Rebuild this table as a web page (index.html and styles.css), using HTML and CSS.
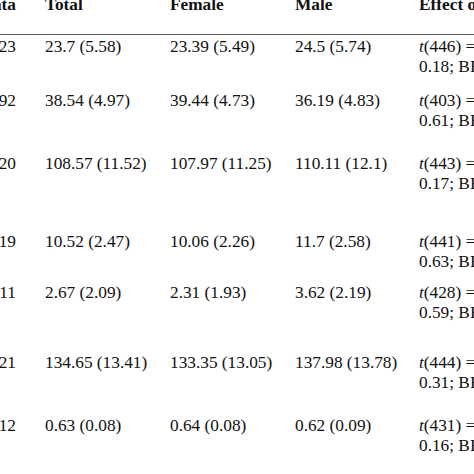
FILE: index.html
```html
<!DOCTYPE html>
<html lang="en">
<head>
<meta charset="utf-8">
<title>Descriptive statistics by gender</title>
<link rel="stylesheet" href="styles.css">
</head>
<body>
<table class="stats">
  <colgroup>
    <col class="col-alpha">
    <col class="col-num">
    <col class="col-num">
    <col class="col-male">
    <col class="col-eff">
  </colgroup>
  <thead>
    <tr>
      <th class="alpha">Cronbach's α in<br>current data</th>
      <th>Total</th>
      <th>Female</th>
      <th>Male</th>
      <th>Effect of gender</th>
    </tr>
  </thead>
  <tbody>
    <tr class="h54">
      <td class="alpha">.823</td>
      <td>23.7 (5.58)</td>
      <td>23.39 (5.49)</td>
      <td>24.5 (5.74)</td>
      <td><i>t</i>(446) = −1.86, <i>p</i> = .064, <i>d</i> =<br>0.18; BF<sub>01</sub> = 2.04</td>
    </tr>
    <tr class="h63">
      <td class="alpha">.792</td>
      <td>38.54 (4.97)</td>
      <td>39.44 (4.73)</td>
      <td>36.19 (4.83)</td>
      <td><i>t</i>(403) = 6.12, <i>p</i> &lt; .001, <i>d</i> =<br>0.61; BF<sub>10</sub> &gt; 1000</td>
    </tr>
    <tr class="h78">
      <td class="alpha">.920</td>
      <td>108.57 (11.52)</td>
      <td>107.97 (11.25)</td>
      <td>110.11 (12.1)</td>
      <td><i>t</i>(443) = −1.73, <i>p</i> = .084, <i>d</i> =<br>0.17; BF<sub>01</sub> = 2.41</td>
    </tr>
    <tr class="h51">
      <td class="alpha">.719</td>
      <td>10.52 (2.47)</td>
      <td>10.06 (2.26)</td>
      <td>11.7 (2.58)</td>
      <td><i>t</i>(441) = −6.55, <i>p</i> &lt; .001, <i>d</i> =<br>0.63; BF<sub>10</sub> &gt; 1000</td>
    </tr>
    <tr class="h70">
      <td class="alpha">.611</td>
      <td>2.67 (2.09)</td>
      <td>2.31 (1.93)</td>
      <td>3.62 (2.19)</td>
      <td><i>t</i>(428) = −6.02, <i>p</i> &lt; .001, <i>d</i> =<br>0.59; BF<sub>10</sub> &gt; 1000</td>
    </tr>
    <tr class="h63">
      <td class="alpha">.921</td>
      <td>134.65 (13.41)</td>
      <td>133.35 (13.05)</td>
      <td>137.98 (13.78)</td>
      <td><i>t</i>(444) = −3.22, <i>p</i> = .001, <i>d</i> =<br>0.31; BF<sub>10</sub> = 14.6</td>
    </tr>
    <tr class="h63">
      <td class="alpha">.712</td>
      <td>0.63 (0.08)</td>
      <td>0.64 (0.08)</td>
      <td>0.62 (0.09)</td>
      <td><i>t</i>(431) = 1.62, <i>p</i> = .106, <i>d</i> =<br>0.16; BF<sub>01</sub> = 2.73</td>
    </tr>
  </tbody>
</table>
</body>
</html>
```
FILE: styles.css
```css
html, body {
  margin: 0;
  padding: 0;
  background: #ffffff;
}

body {
  width: 474px;
  height: 474px;
  overflow: hidden;
}

.stats {
  border-collapse: collapse;
  table-layout: fixed;
  width: 829px;
  margin: -25px 0 0 -110px;
  font-family: "Liberation Serif", "Times New Roman", serif;
  font-size: 17.3px;
  line-height: 20px;
  color: #111111;
}

.col-alpha { width: 155px; }
.col-num { width: 125px; }
.col-male { width: 124px; }
.col-eff { width: 300px; }

.stats th {
  font-weight: bold;
  text-align: left;
  vertical-align: bottom;
  padding: 0 0 19px 0;
  border-bottom: 1px solid #5a5a5a;
  white-space: nowrap;
}

.stats td {
  text-align: left;
  vertical-align: top;
  padding: 2px 0 0 0;
  white-space: nowrap;
}

.stats .alpha {
  text-align: right;
  padding-right: 29px;
}

.stats sub {
  font-size: 11px;
  line-height: 0;
}

.h51 { height: 51px; }
.h54 { height: 54px; }
.h63 { height: 63px; }
.h70 { height: 70px; }
.h78 { height: 78px; }
```
